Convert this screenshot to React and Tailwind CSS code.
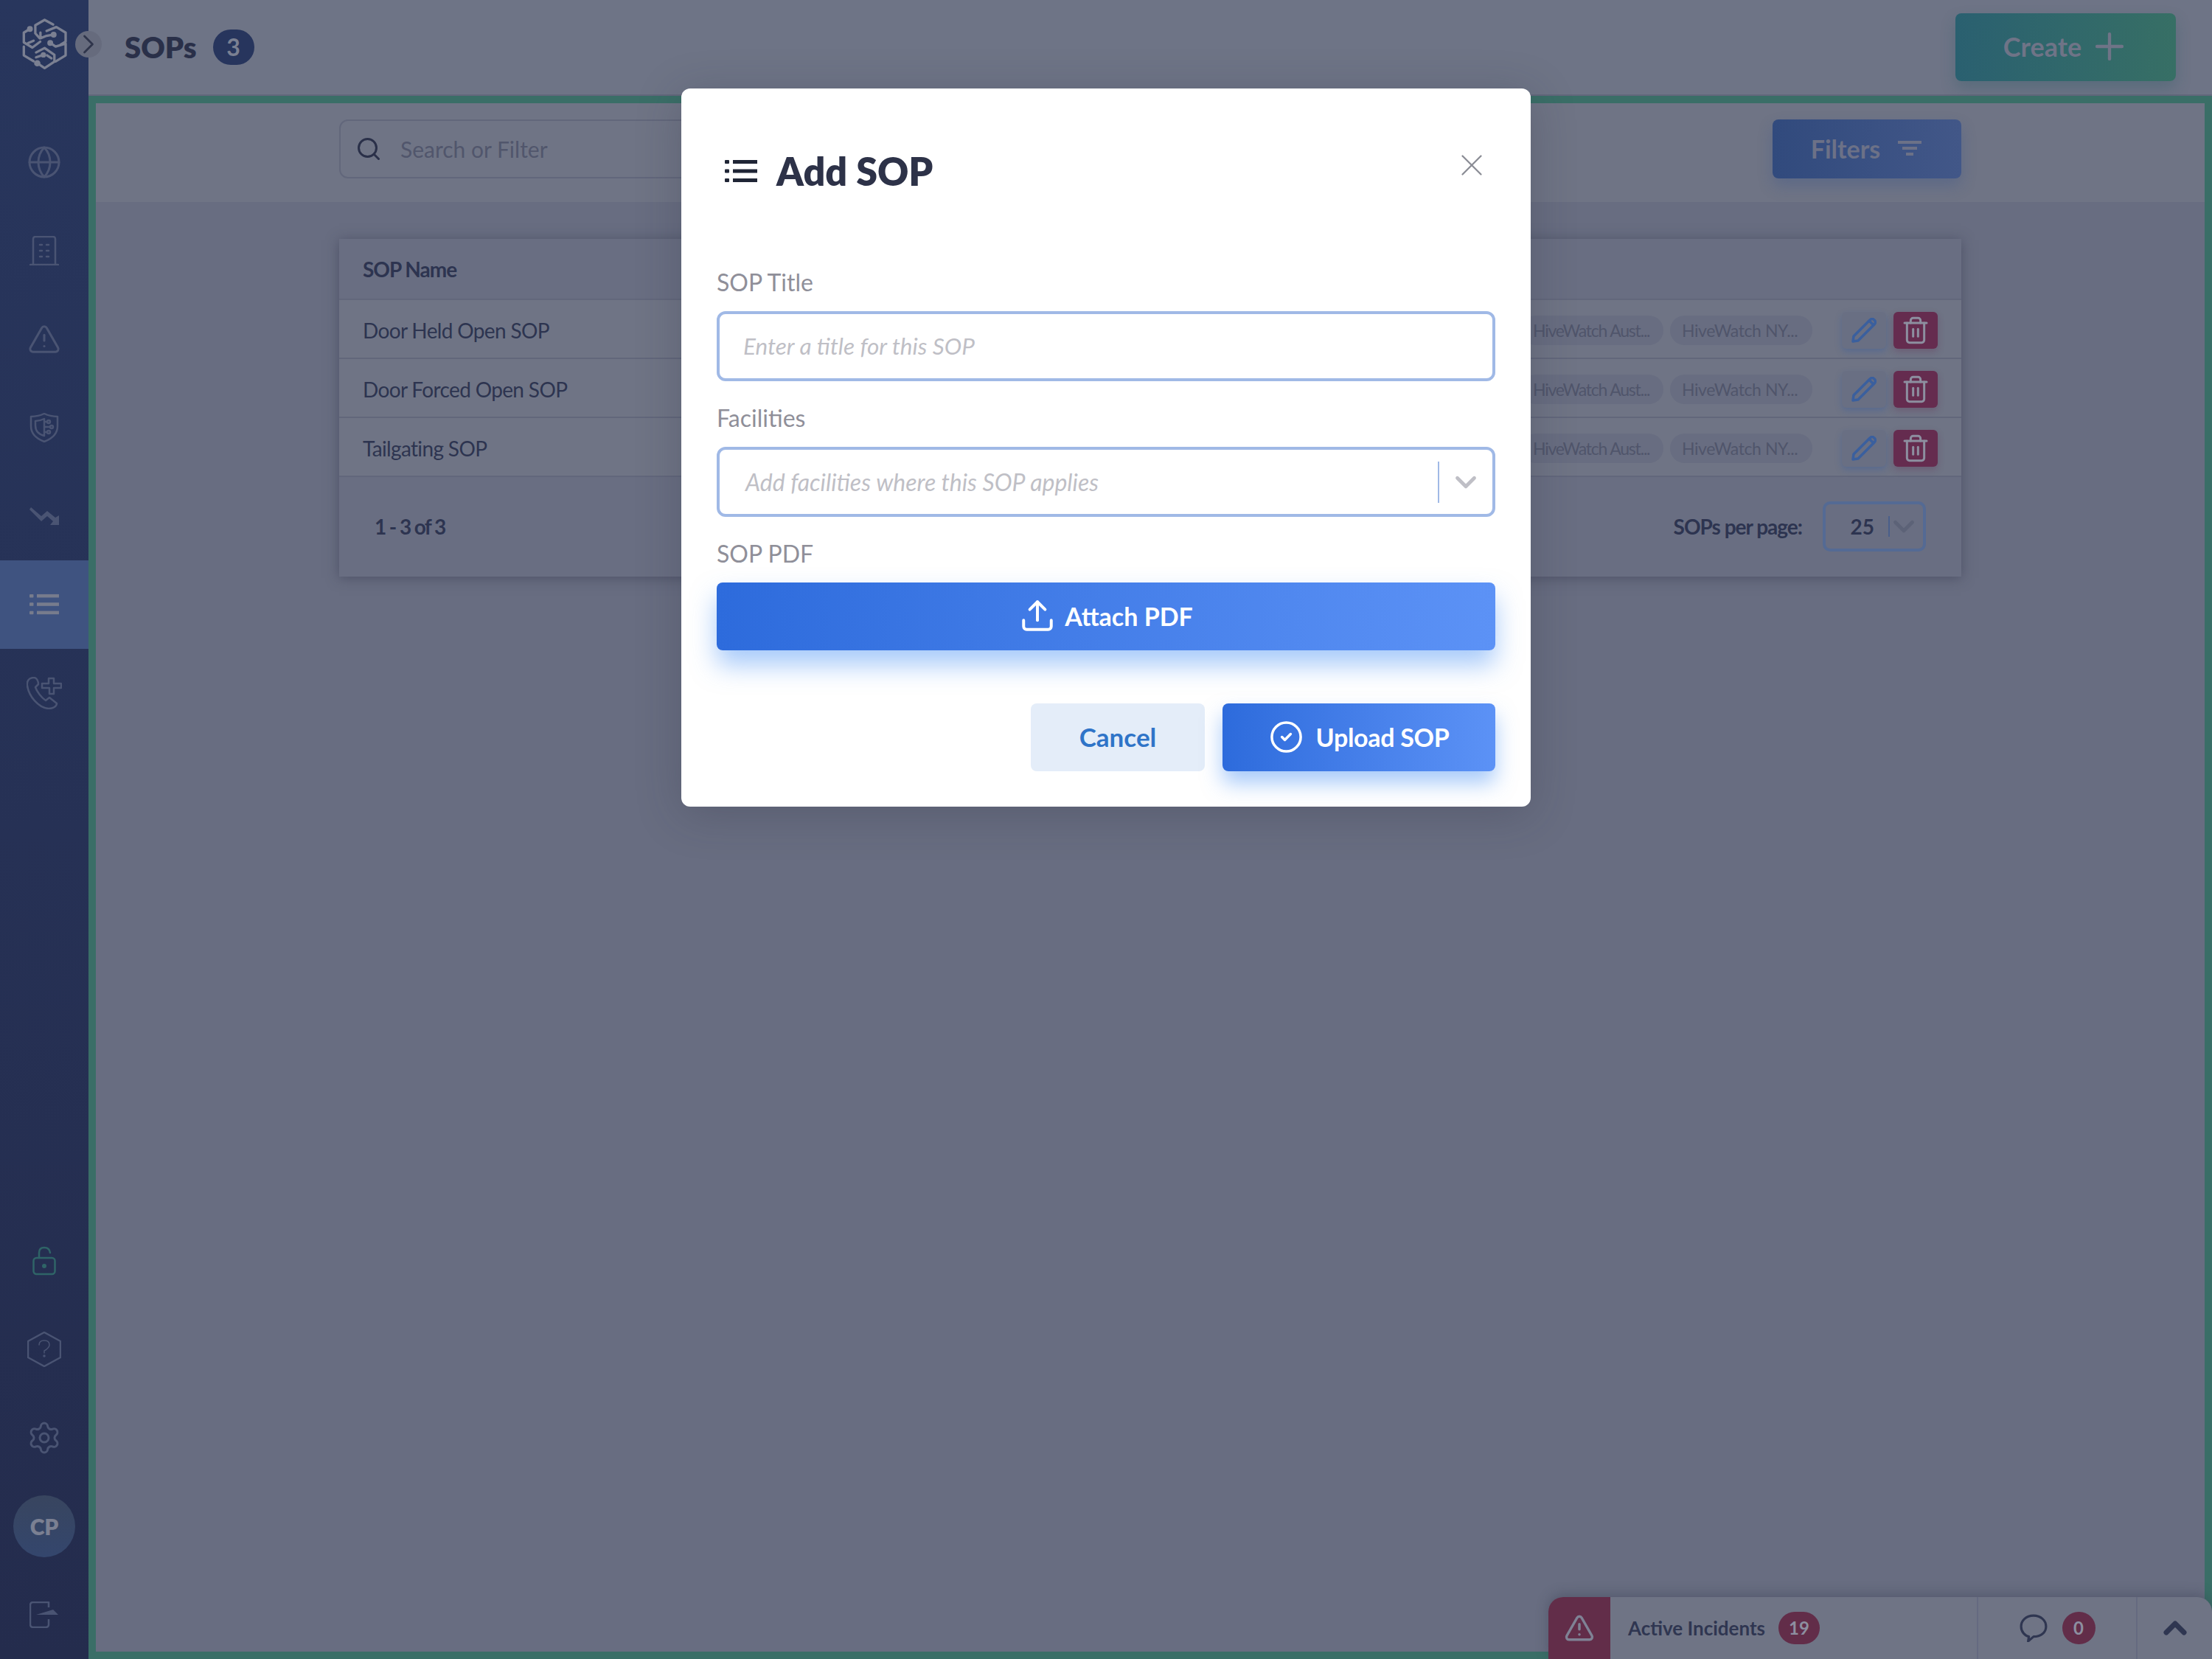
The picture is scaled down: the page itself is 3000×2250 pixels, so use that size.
import { ChevronRight, ChevronDown, ChevronUp, Globe, Search, Plus, X, Settings, Upload, Trash2, TriangleAlert, CircleCheck } from 'lucide-react'

const font = "font-['Lato','Noto_Sans',sans-serif]"

function ListIcon({ className, size = 40 }) {
  return (
    <svg viewBox="0 0 44 32" width={size} height={(size * 32) / 44} className={className} fill="currentColor">
      <rect x="0" y="1" width="6" height="5" rx="1" />
      <rect x="11" y="1" width="33" height="5" />
      <rect x="0" y="13.5" width="6" height="5" rx="1" />
      <rect x="11" y="13.5" width="33" height="5" />
      <rect x="0" y="26" width="6" height="5" rx="1" />
      <rect x="11" y="26" width="33" height="5" />
    </svg>
  )
}

function Logo() {
  return (
    <svg viewBox="25 25 190 212" width="63" height="71" fill="none" stroke="#7b8092" strokeWidth="10" strokeLinejoin="round" strokeLinecap="round">
      <path d="M100 108 L82 88 V55 L120 33 L155 52" />
      <path d="M128 78 L168 62 L206 85 V122 L186 134" />
      <path d="M103 85 V108 L128 98 L157 93" />
      <path d="M60 70 L35 85 V125 L70 146 L102 122" />
      <path d="M75 118 L52 128" />
      <path d="M143 127 L165 142 L206 130 V178 L165 203" />
      <path d="M35 142 V178 L75 202" />
      <path d="M90 210 L120 230 L160 204 V176 L120 148 L85 166" />
      <path d="M115 176 L85 186" />
      <path d="M130 178 L148 190" />
      <circle cx="60" cy="70" r="7" fill="#7b8092" />
      <circle cx="157" cy="93" r="7" fill="#7b8092" />
      <circle cx="143" cy="127" r="7" fill="#7b8092" />
      <circle cx="90" cy="210" r="8" fill="#7b8092" />
      <circle cx="115" cy="176" r="6" fill="#7b8092" />
    </svg>
  )
}

function BuildingIcon() {
  return (
    <svg viewBox="0 0 40 40" width="40" height="40" fill="none" stroke="#4a5473" strokeWidth="2.5" strokeLinecap="round">
      <path d="M1 39 H39 M5 39 V4 Q5 1 8 1 H32 Q35 1 35 4 V39" />
      <path d="M14 12 H17 M23 12 H26 M14 20 H17 M23 20 H26 M14 28 H17 M23 28 H26" />
    </svg>
  )
}

function ShieldIcon() {
  return (
    <svg viewBox="0 0 40 40" width="40" height="40" fill="none" stroke="#4a5473" strokeWidth="2.5" strokeLinejoin="round">
      <path d="M20 1 Q28 5 38 5 V18 Q38 32 20 39 Q2 32 2 18 V5 Q12 5 20 1 Z" />
      <path d="M20 8 V31 Q8 28 8 17 V11 Q14 11 20 8 Z" />
      <path d="M20 12 H25 M20 19 H29 M20 26 H25" />
      <circle cx="26" cy="12" r="2" />
      <circle cx="30" cy="19" r="2" />
      <circle cx="26" cy="26" r="2" />
    </svg>
  )
}

function TrendIcon() {
  return (
    <svg viewBox="0 0 40 24" width="40" height="24" fill="#4a5473" stroke="none">
      <path d="M2 0 L16 12 L24 5 L35 14 L40 11 V24 H28 L32 19 L24 12 L16 19 L0 3 Z" />
    </svg>
  )
}

function PhonePlusIcon() {
  return (
    <svg viewBox="0 0 48 44" width="48" height="44" fill="none" stroke="#4a5473" strokeWidth="2.5" strokeLinejoin="round" strokeLinecap="round">
      <path d="M10 1 C3 1 0 6 1 12 C3 26 16 42 30 43 C36 43 41 40 41 36 L31 28 L26 32 C20 28 14 20 12 14 L16 10 C16 6 14 1 10 1 Z" />
      <path d="M30 2 H37 V9 H47 V15 H37 V23 H31 V15 H21 V9 H30 Z" />
    </svg>
  )
}

function LockIcon() {
  return (
    <svg viewBox="0 0 32 40" width="32" height="40" fill="none" stroke="#2f6467" strokeWidth="2.5" strokeLinecap="round">
      <rect x="1.5" y="16" width="29" height="22" rx="4" />
      <path d="M9 16 V9 Q9 2 16 2 Q23 2 24 9" />
      <circle cx="16" cy="27" r="3" fill="#2f6467" stroke="none" />
    </svg>
  )
}

function HelpHexIcon() {
  return (
    <svg viewBox="0 0 46 48" width="46" height="48" fill="none" stroke="#4a5473" strokeWidth="2.5" strokeLinejoin="round" strokeLinecap="round">
      <path d="M23 1 L45 13 V35 L23 47 L1 35 V13 Z" />
      <path d="M16 18 Q16 12 23 12 Q30 12 30 18 Q30 22 23 26 V29" strokeWidth="1.5" />
      <circle cx="23" cy="33" r="1" strokeWidth="1.5" />
    </svg>
  )
}

function LogoutIcon() {
  return (
    <svg viewBox="0 0 40 36" width="40" height="36" fill="none" stroke="#4a5473" strokeWidth="2.5" strokeLinejoin="round">
      <path d="M26 8 V1 H5 Q1 1 1 5 V31 Q1 35 5 35 H22 Q26 35 26 31 V24" />
      <path d="M9 18 L32 11 L39 18 Z" fill="#4a5473" stroke="none" />
    </svg>
  )
}

function FilterIcon() {
  return (
    <svg viewBox="0 0 32 20" width="32" height="20" fill="#6c7187">
      <rect x="0" y="0" width="32" height="4" />
      <rect x="6" y="8" width="20" height="4" />
      <rect x="11" y="16" width="10" height="4" />
    </svg>
  )
}

function PencilIcon() {
  return (
    <svg viewBox="0 0 34 34" width="34" height="34" fill="none" stroke="#3a5f9e" strokeWidth="3.5" strokeLinejoin="round">
      <path d="M25 3 Q28 0 31 3 Q34 6 31 9 L9 31 L2 32 L3 25 Z" />
      <path d="M24 4 L30 10" />
    </svg>
  )
}

function NavItem({ active, children }) {
  return (
    <div className={`flex h-[120px] items-center justify-center ${active ? 'bg-[#3f5380]' : ''}`}>
      {children}
    </div>
  )
}

function Row({ name }) {
  return (
    <div className="flex h-[80px] items-center justify-between border-b-2 border-[#62677b] bg-[#6f7485] pt-[4px] pr-[32px] pl-[32px]">
      <span className="text-[28px] tracking-[-0.65px] text-[#2d3450]">{name}</span>
      <div className="flex items-center">
        <div className="flex gap-[9px]">
          <span className="flex h-[40px] w-[193px] items-center rounded-full bg-[#686d81] pl-[16px] text-[23px] tracking-[-1.2px] text-[#50556b]">HiveWatch Aust...</span>
          <span className="flex h-[40px] w-[193px] items-center rounded-full bg-[#686d81] pl-[16px] text-[23px] tracking-[-0.4px] text-[#50556b]">HiveWatch NY...</span>
        </div>
        <div className="ml-[40px] flex gap-[10px]">
          <button className="flex h-[50px] w-[60px] items-center justify-center rounded-[6px] bg-[#696f83] shadow-[0_4px_8px_rgba(50,90,160,0.35)]">
            <PencilIcon />
          </button>
          <button className="flex h-[50px] w-[60px] items-center justify-center rounded-[6px] bg-[#652c4f] shadow-[0_4px_10px_rgba(100,40,80,0.3)]">
            <Trash2 size={40} strokeWidth={1.8} className="text-[#8d8fa0]" />
          </button>
        </div>
      </div>
    </div>
  )
}

function Modal() {
  return (
    <div className="absolute top-[120px] left-[924px] flex h-[974px] w-[1152px] flex-col rounded-[12px] bg-white px-[48px] shadow-[0_10px_60px_rgba(40,45,60,0.25)]">
      <div className="relative mt-[87px] flex h-[50px] items-center pl-[11px]">
        <ListIcon size={44} className="text-[#1f2535]" />
        <h2 className="ml-[26px] text-[52px] leading-none font-extrabold text-[#2d3248]">Add SOP</h2>
        <X size={50} strokeWidth={1.1} className="absolute top-[-8px] right-[7px] text-[#8b8d95]" />
      </div>

      <label className="mt-[106px] text-[32px] leading-[40px] text-[#8f8f99]">SOP Title</label>
      <div className="mt-[19px] flex h-[95px] items-center rounded-[12px] border-4 border-[#a0b9e6] pl-[32px]">
        <span className="text-[31.5px] text-[#bfbfc6] italic">Enter a title for this SOP</span>
      </div>

      <label className="mt-[30px] text-[32px] leading-[40px] text-[#8f8f99]">Facilities</label>
      <div className="mt-[19px] flex h-[95px] items-center rounded-[12px] border-4 border-[#a0b9e6] pl-[35px]">
        <span className="flex-1 text-[32px] text-[#bfbfc6] italic">Add facilities where this SOP applies</span>
        <span className="h-[56px] w-[2px] bg-[#a0b9e6]" />
        <ChevronDown size={46} strokeWidth={2.5} className="mx-[13px] text-[#bfbfc6]" />
      </div>

      <label className="mt-[30px] text-[32px] leading-[40px] text-[#8f8f99]">SOP PDF</label>
      <button className="mt-[19px] flex h-[92px] items-center justify-center gap-[12px] rounded-[8px] bg-gradient-to-r from-[#2d6bdc] to-[#5c92f6] pb-[2px] text-[34px] font-bold text-white shadow-[0_20px_34px_rgba(80,150,245,0.5)]">
        <Upload size={50} strokeWidth={1.9} />
        Attach PDF
      </button>

      <div className="mt-[72px] flex justify-end gap-[24px]">
        <button className="h-[92px] w-[236px] rounded-[8px] bg-[#e4edf9] pb-[2px] text-[35px] font-bold text-[#2f74c8]">Cancel</button>
        <button className="flex h-[92px] w-[370px] items-center justify-center gap-[17px] rounded-[8px] bg-gradient-to-r from-[#2d6bdc] to-[#5c92f6] pb-[2px] text-[34px] font-bold tracking-[-0.3px] text-white shadow-[0_16px_28px_rgba(80,150,245,0.5)]">
          <CircleCheck size={47} strokeWidth={1.8} />
          Upload SOP
        </button>
      </div>
    </div>
  )
}

export default function App() {
  return (
    <div className={`relative flex h-[2250px] w-[3000px] overflow-hidden bg-[#6e7486] ${font}`}>
      {/* sidebar */}
      <aside className="flex w-[120px] shrink-0 flex-col bg-gradient-to-b from-[#28365d] to-[#242c4d]">
        <div className="flex h-[160px] justify-center pt-[24px]">
          <Logo />
        </div>
        <NavItem><Globe size={48} strokeWidth={1.5} className="text-[#4a5473]" /></NavItem>
        <NavItem><BuildingIcon /></NavItem>
        <NavItem><TriangleAlert size={46} strokeWidth={1.6} className="text-[#4a5473]" /></NavItem>
        <NavItem><ShieldIcon /></NavItem>
        <NavItem><TrendIcon /></NavItem>
        <NavItem active><ListIcon size={40} className="text-[#777c8d]" /></NavItem>
        <NavItem><PhonePlusIcon /></NavItem>
        <div className="flex-1" />
        <NavItem><LockIcon /></NavItem>
        <NavItem><HelpHexIcon /></NavItem>
        <NavItem><Settings size={48} strokeWidth={1.5} className="text-[#4a5473]" /></NavItem>
        <NavItem>
          <div className="flex h-[84px] w-[84px] items-center justify-center rounded-full bg-gradient-to-b from-[#38455f] to-[#34466d] text-[30px] font-extrabold text-[#7b8092]">CP</div>
        </NavItem>
        <NavItem><LogoutIcon /></NavItem>
      </aside>

      {/* expand toggle */}
      <div className="absolute top-[42px] left-[102px] flex h-[36px] w-[36px] items-center justify-center rounded-full bg-[#666b7d]">
        <ChevronRight size={44} strokeWidth={1.5} className="shrink-0 text-[#2f354b]" />
      </div>

      <main className="flex min-w-0 flex-1 flex-col">
        <header className="flex h-[130px] shrink-0 items-center justify-between border-b-2 border-[#62677b] bg-[#6e7486] pr-[49px] pl-[49px]">
          <div className="flex items-center gap-[22px]">
            <h1 className="text-[40px] font-extrabold text-[#2a3049]">SOPs</h1>
            <span className="flex h-[48px] w-[56px] items-center justify-center rounded-full bg-[#27355d] text-[32px] font-bold text-[#7b8092]">3</span>
          </div>
          <button className="flex h-[92px] w-[299px] items-center justify-center gap-[9px] rounded-[8px] bg-gradient-to-r from-[#2a6070] to-[#376f65] pb-[2px] pl-[4px] text-[36px] leading-none font-bold text-[#6f7487] shadow-[0_10px_20px_rgba(40,90,100,0.3)]">
            Create
            <Plus size={58} strokeWidth={1.8} />
          </button>
        </header>

        <div className="flex min-h-0 flex-1 flex-col border-[10px] border-[#3a6e67] bg-[#686d81]">
          <div className="flex h-[134px] shrink-0 items-start justify-between bg-[#6f7485] pt-[22px] pr-[330px] pl-[330px]">
            <div className="flex h-[80px] w-[800px] items-center rounded-[12px] border-2 border-[#62677b] pl-[20px]">
              <Search size={36} strokeWidth={2} className="text-[#2a3049]" />
              <span className="ml-[25px] text-[30px] text-[#51566c]">Search or Filter</span>
            </div>
            <button className="flex h-[80px] w-[256px] items-center justify-center gap-[24px] rounded-[8px] bg-gradient-to-r from-[#314a7d] to-[#425788] pr-[2px] pb-[2px] text-[34px] font-bold text-[#6c7187] shadow-[0_10px_20px_rgba(50,80,140,0.3)]">
              Filters
              <FilterIcon />
            </button>
          </div>

          <div className="px-[330px] pt-[50px]">
            <div className="w-[2200px] bg-[#696e82] shadow-[0_2px_16px_rgba(50,54,75,0.5)]">
              <div className="flex h-[83px] items-center border-b-2 border-[#62677b] pl-[32px] text-[28px] font-bold tracking-[-1px] text-[#2d3450]">SOP Name</div>
              <Row name="Door Held Open SOP" />
              <Row name="Door Forced Open SOP" />
              <Row name="Tailgating SOP" />
              <div className="flex h-[135px] items-center justify-between pr-[48px] pb-[2px] pl-[48px]">
                <span className="text-[28px] font-bold tracking-[-1.6px] text-[#2d3450]">1 - 3 of 3</span>
                <div className="flex items-center gap-[28px]">
                  <span className="text-[28px] font-bold tracking-[-1px] text-[#2d3450]">SOPs per page:</span>
                  <div className="flex h-[68px] w-[140px] items-center rounded-[10px] border-4 border-[#546a94]">
                    <span className="w-[66px] text-right text-[28px] font-bold text-[#2d3450]">25</span>
                    <span className="ml-[19px] h-[28px] w-[2px] bg-[#4a5f8a]" />
                    <ChevronDown size={46} strokeWidth={2.5} className="ml-[-4px] shrink-0 text-[#5c6277]" />
                  </div>
                </div>
              </div>
            </div>
          </div>
        </div>
      </main>

      {/* incidents tray */}
      <div className="absolute right-0 bottom-0 flex h-[84px] w-[900px] overflow-hidden rounded-t-[20px] bg-[#6f7485] shadow-[0_-4px_16px_rgba(50,54,75,0.35)]">
        <div className="flex w-[84px] items-center justify-center bg-[#622d49]">
          <TriangleAlert size={42} strokeWidth={2} className="text-[#7f8295]" />
        </div>
        <div className="flex w-[499px] items-center border-r-2 border-[#656a80] pl-[24px]">
          <span className="text-[26px] font-bold text-[#2f3651]">Active Incidents</span>
          <span className="ml-[18px] flex h-[44px] w-[56px] items-center justify-center rounded-full bg-[#622d49] text-[24px] font-bold text-[#8d8fa0]">19</span>
        </div>
        <div className="flex w-[216px] items-center justify-center gap-[20px] border-r-2 border-[#656a80]">
          <svg viewBox="0 0 36 36" width="38" height="38" fill="none" stroke="#2f3651" strokeWidth="3" strokeLinejoin="round">
            <path d="M18 2 C8 2 2 9 2 16 C2 23 7 28 12 29 L11 35 L18 29 C27 29 34 24 34 16 C34 8 27 2 18 2 Z" />
          </svg>
          <span className="flex h-[44px] w-[45px] items-center justify-center rounded-full bg-[#622d49] text-[24px] font-bold text-[#8d8fa0]">0</span>
        </div>
        <div className="flex flex-1 items-center justify-center">
          <ChevronUp size={48} strokeWidth={3.5} className="text-[#2f3651]" />
        </div>
      </div>

      <Modal />
    </div>
  )
}
